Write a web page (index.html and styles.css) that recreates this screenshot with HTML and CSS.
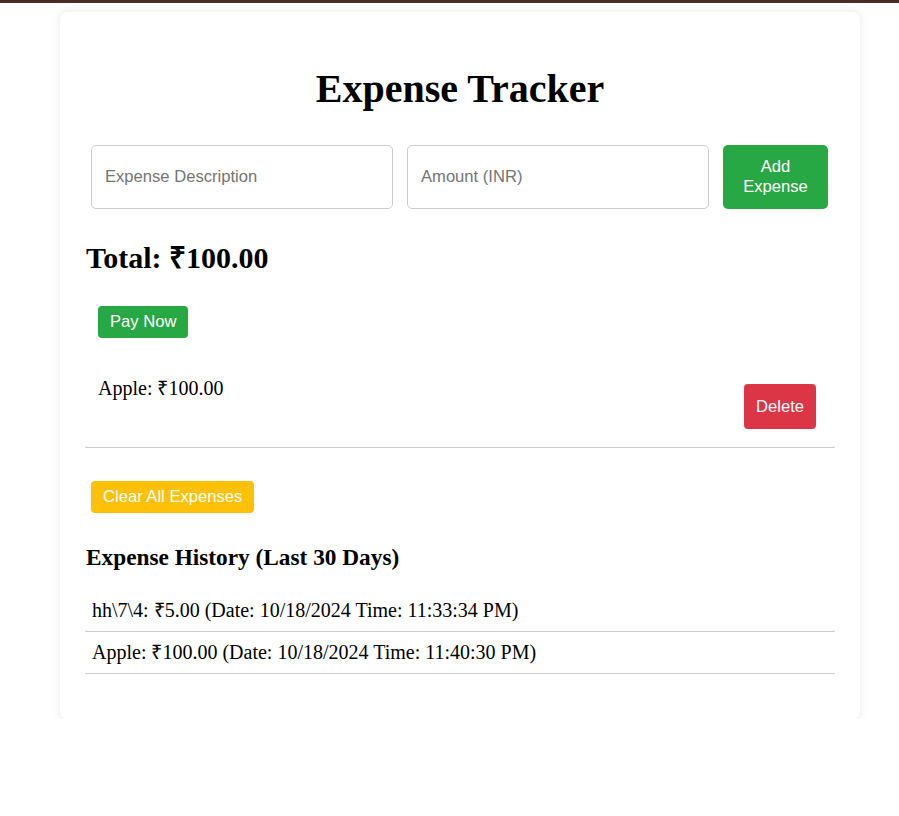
FILE: index.html
```html
<!DOCTYPE html>
<html lang="en">

<head>
  <meta charset="UTF-8">
  <meta name="viewport" content="width=device-width, initial-scale=1.0">
  <title>Expense Tracker</title>
  <link rel="stylesheet" href="styles.css">
</head>

<body>
  <div class="container">
    <h1>Expense Tracker</h1>

    <div class="input-row">
      <input type="text" id="desc" placeholder="Expense Description">
      <input type="number" id="amount" placeholder="Amount (INR)">
      <button class="btn btn-add" id="addBtn">Add Expense</button>
    </div>

    <h2 class="total">Total: ₹<span id="total">100.00</span></h2>

    <button class="btn btn-pay" id="payBtn">Pay Now</button>

    <ul class="expense-list" id="list">
      <li>
        <span>Apple: ₹100.00</span>
        <button class="btn btn-delete">Delete</button>
      </li>
    </ul>

    <button class="btn btn-clear" id="clearBtn">Clear All Expenses</button>

    <h3>Expense History (Last 30 Days)</h3>
    <ul class="history" id="history">
      <li>hh\7\4: ₹5.00 (Date: 10/18/2024 Time: 11:33:34 PM)</li>
      <li>Apple: ₹100.00 (Date: 10/18/2024 Time: 11:40:30 PM)</li>
    </ul>
  </div>
</body>

</html>
```

FILE: styles.css
```css
body {
  margin: 0;
  border-top: 3px solid #4a2d29;
  background: #fff;
  font-family: "Liberation Serif", "Times New Roman", serif;
}

.container {
  width: 800px;
  box-sizing: border-box;
  margin: 9px 0 0 60px;
  padding: 25px 25px 45px;
  background: #fff;
  border-radius: 8px;
  box-shadow: 0 0 10px rgba(0, 0, 0, 0.1);
}

h1 {
  font-size: 40px;
  text-align: center;
  margin: 28px 0 33px;
}

.input-row {
  display: flex;
  gap: 14px;
  padding: 0 7px 0 6px;
}

.input-row input {
  flex: 1;
  min-width: 0;
  height: 64px;
  box-sizing: border-box;
  padding: 0 13px;
  border: 1px solid #ccc;
  border-radius: 5px;
  font-family: "Liberation Sans", Arial, sans-serif;
  font-size: 16.6px;
}

.btn {
  display: block;
  border: none;
  border-radius: 4px;
  color: #fff;
  font-family: "Liberation Sans", Arial, sans-serif;
  font-size: 16.6px;
  line-height: 18px;
  padding: 7px 12px;
  cursor: pointer;
}

.btn-add {
  width: 105px;
  height: 64px;
  background: #28a745;
  border-radius: 5px;
  line-height: 20px;
}

.total {
  font-size: 30px;
  line-height: 34px;
  margin: 32px 0 31px 1px;
}

.btn-pay {
  background: #28a745;
  margin-left: 13px;
}

.expense-list {
  list-style: none;
  padding: 0;
  margin: 26px 0 0;
}

.expense-list li {
  display: flex;
  justify-content: space-between;
  align-items: flex-start;
  padding: 10px 19px 18px 13px;
  border-bottom: 1px solid #ccc;
  font-size: 20px;
}

.btn-delete {
  background: #dc3545;
  line-height: 19px;
  padding: 13px 12px;
  margin-top: 10px;
}

.btn-clear {
  background: #ffc107;
  margin: 33px 0 0 6px;
}

h3 {
  font-size: 23.3px;
  margin: 31px 0 19px 1px;
}

.history {
  list-style: none;
  padding: 0;
  margin: 0;
}

.history li {
  padding: 9px 7px;
  border-bottom: 1px solid #ccc;
  font-size: 20px;
  line-height: 23px;
}
```
